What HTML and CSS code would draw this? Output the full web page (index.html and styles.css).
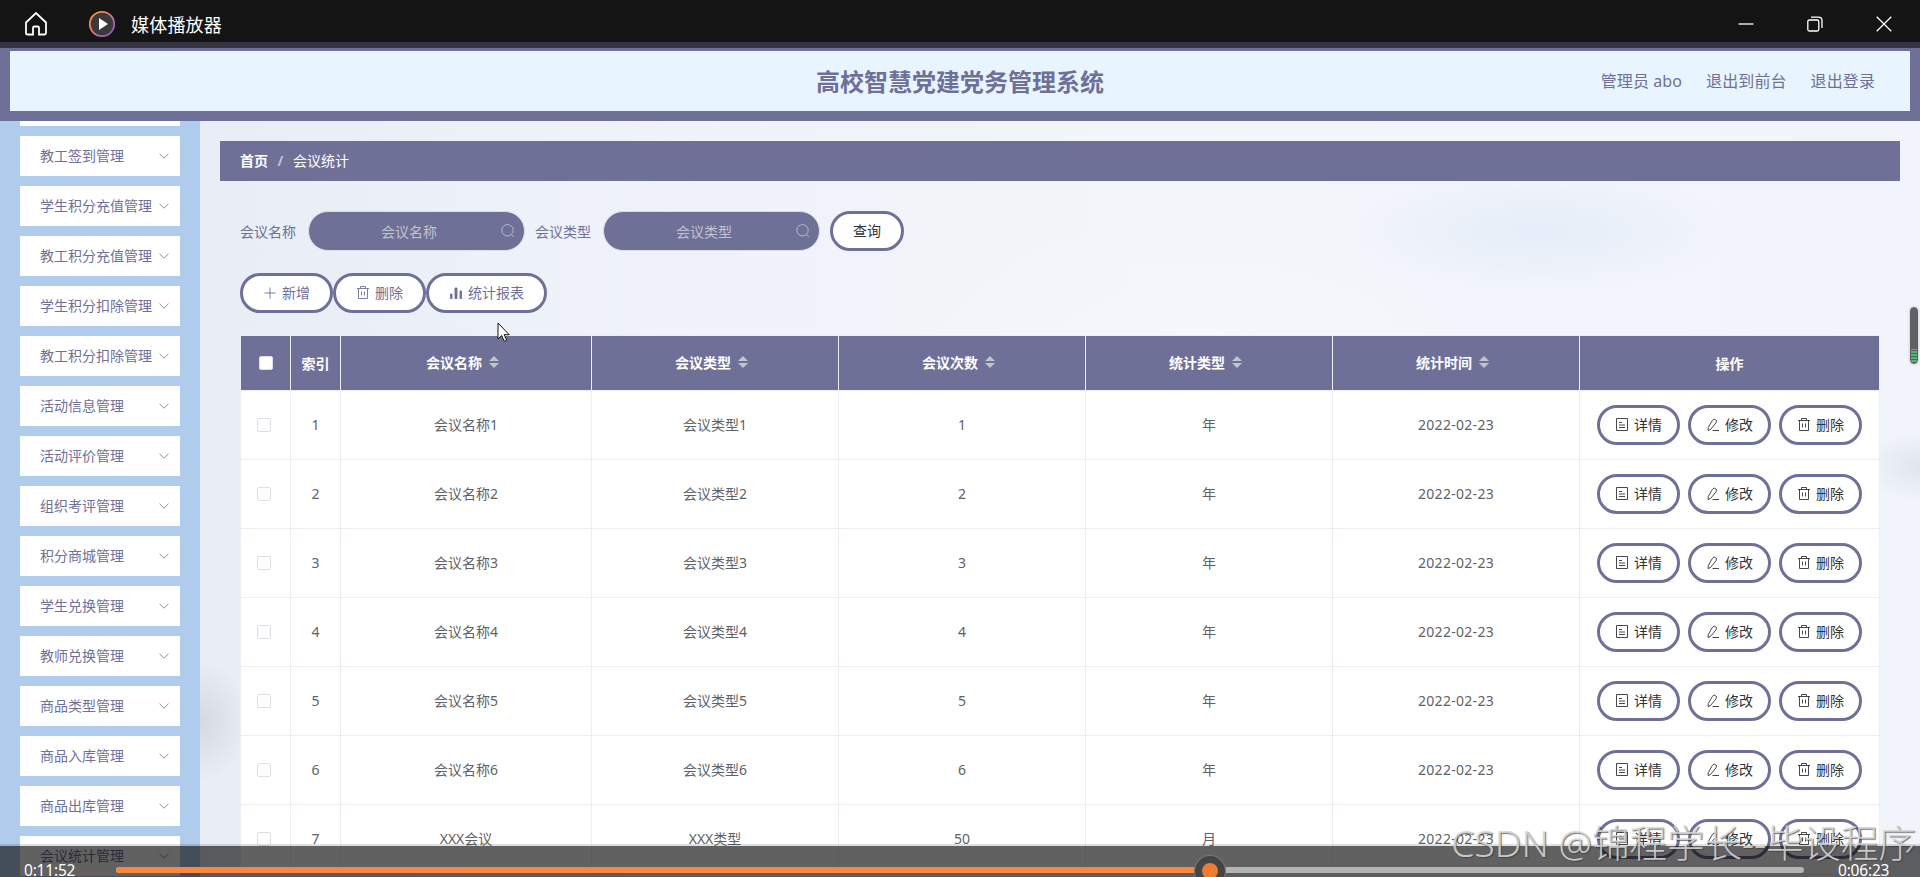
FILE: index.html
```
<!DOCTYPE html>
<html lang="zh-CN">
<head>
    <meta charset="UTF-8">
    <meta name="viewport" content="width=device-width, initial-scale=1.0">
    <title>高校智慧党建党务管理系统</title>
    <link rel="stylesheet" href="styles.css">
</head>
<body>
    <!-- 图标 -->
    <svg width="0" height="0" class="sprite">
        <symbol id="i-down" viewBox="0 0 12 12"><path d="M1.500 3.800 6 8.200l4.500-4.400"/></symbol>
        <symbol id="i-search" viewBox="0 0 14 14"><circle cx="6.500" cy="6.300" r="5.700"/><path d="M10.500 10.500 12.800 12.800"/></symbol>
        <symbol id="i-plus" viewBox="0 0 14 14"><path d="M7 1.500v11M1.500 7h11"/></symbol>
        <symbol id="i-del" viewBox="0 0 14 14"><path d="M1 2.500h12M4.500 2.500V.5h5v2M2.500 2.500v10h9v-10M5.500 5.500v4M8.500 5.500v4"/></symbol>
        <symbol id="i-doc" viewBox="0 0 14 14"><path d="M1.500.5h11v12h-11zM4 4.500h3M4 7h6M4 9.500h6"/></symbol>
        <symbol id="i-edit" viewBox="0 0 14 14"><path d="M6.300 2.500 8.200 1l2.300 1.500-.5 2.300-5.500 6.700L2 12.500l.3-3zM6.500 12.500h6.500"/></symbol>
        <symbol id="i-data" viewBox="0 0 14 14"><path d="M1.500 8h1.500v4.500h-1.500zM6 2h2v10.500H6zM11 5h1.500v7.500H11z" fill="currentColor"/></symbol>
    </svg>

    <div class="titlebar">
        <svg class="home" width="24" height="26" viewBox="0 0 24 26"><path d="M2 11.500 12 2l10 9.500V22q0 1.500-1.500 1.500H15V17q0-1.500-1.500-1.500h-3Q9 15.500 9 17v6.500H3.500Q2 23.500 2 22z"/></svg>
        <svg class="logo" width="28" height="28" viewBox="0 0 28 28">
            <defs><linearGradient id="ring" x1="0" y1="0" x2="1" y2="1"><stop offset=".15" stop-color="#ff8f3c"/><stop offset=".5" stop-color="#d9788c"/><stop offset=".9" stop-color="#8a55c8"/></linearGradient></defs>
            <circle cx="14" cy="14" r="12.200" fill="#3a3a3a" stroke="url(#ring)" stroke-width="1.800"/>
            <path d="M11 8l9 6-9 6z" fill="#fff"/>
        </svg>
        <span class="app-name">媒体播放器</span>
        <div class="win-btns">
            <svg width="16" height="16" viewBox="0 0 16 16"><path d="M.5 8h15"/></svg>
            <svg width="16" height="16" viewBox="0 0 16 16"><rect x=".8" y="4" width="11" height="11" rx="1.500"/><path d="M4 1.200h7.500Q15 1.200 15 4.500V12"/></svg>
            <svg width="16" height="16" viewBox="0 0 16 16"><path d="M.7.700l14.600 14.600M15.300.700.7 15.300"/></svg>
        </div>
    </div>

    <div class="header">
        <h1>高校智慧党建党务管理系统</h1>
        <div class="user">
            <span>管理员 abo</span>
            <span>退出到前台</span>
            <span>退出登录</span>
        </div>
    </div>

    <div class="page">
        <div class="sidebar" id="sidebar">
            <div class="menu-item first"></div>
        </div>
        <div class="main">
            <div class="breadcrumb"><b>首页</b><i>/</i><span>会议统计</span></div>
            <div class="search">
                <label>会议名称</label>
                <div class="input"><span>会议名称</span><svg class="icon"><use href="#i-search"/></svg></div>
                <label>会议类型</label>
                <div class="input"><span>会议类型</span><svg class="icon"><use href="#i-search"/></svg></div>
                <button class="btn query">查询</button>
            </div>
            <div class="actions">
                <button class="btn"><svg class="icon"><use href="#i-plus"/></svg>新增</button>
                <button class="btn"><svg class="icon"><use href="#i-del"/></svg>删除</button>
                <button class="btn"><svg class="icon"><use href="#i-data"/></svg>统计报表</button>
            </div>
            <table class="table">
                <colgroup>
                    <col class="c-sm"><col class="c-sm"><col class="c-name"><col class="c-md"><col class="c-md"><col class="c-md"><col class="c-md"><col class="c-op">
                </colgroup>
                <thead>
                    <tr>
                        <th><div class="check"></div></th>
                        <th>索引</th>
                        <th><div class="sortable">会议名称<span class="sort"></span></div></th>
                        <th><div class="sortable">会议类型<span class="sort"></span></div></th>
                        <th><div class="sortable">会议次数<span class="sort"></span></div></th>
                        <th><div class="sortable">统计类型<span class="sort"></span></div></th>
                        <th><div class="sortable">统计时间<span class="sort"></span></div></th>
                        <th>操作</th>
                    </tr>
                </thead>
                <tbody id="rows"></tbody>
            </table>
        </div>
    </div>

    <div class="volume"></div>
    <svg class="cursor" width="14" height="21" viewBox="0 0 14 21"><path d="M1 1v16l3.700-3.500 2.500 5.800 2.500-1.100-2.500-5.500h5z"/></svg>

    <div class="player">
        <span class="time">0:11:52</span>
        <div class="track"><div class="played"></div><div class="thumb"></div></div>
        <span class="time">0:06:23</span>
    </div>
    <div class="watermark">CSDN @锦程学长--毕设程序</div>

    <script>
        const menus = ['教工签到管理', '学生积分充值管理', '教工积分充值管理', '学生积分扣除管理', '教工积分扣除管理',
            '活动信息管理', '活动评价管理', '组织考评管理', '积分商城管理', '学生兑换管理', '教师兑换管理',
            '商品类型管理', '商品入库管理', '商品出库管理', '会议统计管理'];
        document.getElementById('sidebar').innerHTML += menus.map(m =>
            `<div class="menu-item"><span>${m}</span><svg class="arrow"><use href="#i-down"/></svg></div>`).join('');

        const list = [];
        for (let i = 1; i <= 6; i++) {
            list.push(['会议名称' + i, '会议类型' + i, i, '年']);
        }
        list.push(['XXX会议', 'XXX类型', 50, '月']);

        const op = (icon, text) => `<button class="btn"><svg class="icon"><use href="#${icon}"/></svg>${text}</button>`;
        document.getElementById('rows').innerHTML = list.map((r, i) => `
            <tr>
                <td><div class="check"></div></td>
                <td class="text">${i + 1}</td>
                ${r.map(v => `<td class="text">${v}</td>`).join('')}
                <td class="text date">2022-02-23</td>
                <td><div class="ops">${op('i-doc', '详情')}${op('i-edit', '修改')}${op('i-del', '删除')}</div></td>
            </tr>`).join('');
    </script>
</body>
</html>
```
FILE: styles.css
```
* {
    box-sizing: border-box;
}

body {
    margin: 0;
    height: 877px;
    overflow: hidden;
    display: flex;
    flex-direction: column;
    font-family: "Noto Sans", "Noto Sans CJK SC", sans-serif;
    font-size: 14px;
    color: #606266;
}

.sprite {
    position: absolute;
}

svg {
    fill: none;
    stroke: currentColor;
    flex-shrink: 0;
}

.icon {
    width: 14px;
    height: 14px;
    stroke-width: .9;
}

/* 播放器标题栏 */
.titlebar {
    height: 48px;
    flex-shrink: 0;
    background: #141414;
    border-bottom: 6px solid #363440;
    color: #fff;
    display: flex;
    align-items: center;
    padding: 5px 28px 0 24px;
}

.home {
    stroke-width: 1.8;
}

.logo {
    margin-left: 40px;
    stroke: none;
}

.app-name {
    font-size: 18px;
    margin-left: 15px;
    letter-spacing: .2px;
}

.win-btns {
    margin-left: auto;
    display: flex;
    gap: 53px;
}

.win-btns svg {
    stroke-width: 1.3;
}

/* 顶部 */
.header {
    height: 73px;
    flex-shrink: 0;
    background: #e8f5ff;
    border: solid #6f7098;
    border-width: 3px 10px 10px;
    display: grid;
    grid-template-columns: 1fr auto 1fr;
    align-items: center;
    color: #6f7098;
}

.header h1 {
    grid-column: 2;
    margin: 0;
    padding-top: 1px;
    font-size: 24px;
    line-height: 59px;
}

.user {
    display: flex;
    justify-content: flex-end;
    gap: 24px;
    padding: 0 35px 2px 0;
    font-size: 16px;
}

.user span {
    letter-spacing: .1px;
}

.page {
    flex: 1;
    min-height: 0;
    display: flex;
}

/* 左侧菜单 */
.sidebar {
    width: 200px;
    flex-shrink: 0;
    background: #b0ccec;
    padding: 0 20px;
    overflow: hidden;
}

.menu-item {
    height: 40px;
    margin-bottom: 10px;
    padding: 0 10px 0 20px;
    background: #fff;
    color: #6f7098;
    display: flex;
    align-items: center;
    justify-content: space-between;
    white-space: nowrap;
}

.menu-item span {
    padding-bottom: 2px;
}

.menu-item.first {
    height: 5px;
}

.arrow {
    width: 12px;
    height: 12px;
    color: #8d8eac;
}

.main {
    flex: 1;
    min-width: 0;
    padding: 20px 20px 0;
    overflow: hidden;
    background:
        radial-gradient(ellipse 70px 36px at 1730px 345px, rgba(210, 216, 223, .6), transparent),
        radial-gradient(ellipse 50px 60px at 0 600px, rgba(205, 208, 216, .7), transparent),
        radial-gradient(ellipse 190px 60px at 1340px 110px, rgba(224, 234, 247, .7), transparent),
        radial-gradient(ellipse 300px 120px at 1000px 220px, #f6f7fc, transparent),
        linear-gradient(90deg, #e8edf6, #eff3f9 25%, #f2f5fa 60%, #f1f4fb);
}

.breadcrumb {
    height: 40px;
    background: #6f7098;
    color: #fff;
    display: flex;
    align-items: center;
    padding: 0 0 2px 20px;
}

.breadcrumb i {
    margin: 0 9px;
    color: #c0c4cc;
    font-style: normal;
    font-weight: 700;
    width: 7px;
    text-align: center;
}

.search {
    display: flex;
    align-items: center;
    padding: 30px 20px 0;
    color: #6f7098;
}

.search label,
.input span {
    padding-bottom: 1px;
}

.input {
    width: 217px;
    height: 40px;
    margin: 0 10px 0 12px;
    border: 1px solid #dcdfe6;
    border-radius: 20px;
    background: #6f7098;
    color: #c0c4cc;
    display: flex;
    align-items: center;
    padding: 0 9px 0 8px;
}

.input span {
    flex: 1;
    text-align: center;
}

.btn {
    height: 40px;
    padding: 0 20px;
    border: 3px solid #6f7098;
    border-radius: 20px;
    background: #fff;
    color: #6f7098;
    font: inherit;
    line-height: 34px;
    display: flex;
    align-items: center;
    gap: 5px;
    white-space: nowrap;
}

.btn.query {
    color: #333;
}

.actions {
    display: flex;
    padding: 22px 20px 0;
}

/* 表格 */
.table {
    width: 1640px;
    margin: 22px 0 0 20px;
    table-layout: fixed;
    border-collapse: separate;
    border-spacing: 0;
    border: solid #ebeef5;
    border-width: 1px 0 0 1px;
    background: #fff;
    text-align: center;
}

.c-sm { width: 50px; }
.c-name { width: 251px; }
.c-md { width: 247px; }
.c-op { width: 300px; }

.table th,
.table td {
    padding: 0;
    border: solid #ebeef5;
    border-width: 0 1px 1px 0;
}

.table th {
    height: 55px;
    padding-bottom: 1px;
    background: #6f7098;
    color: #fff;
}

.table td {
    height: 69px;
}

.table td.text {
    padding-bottom: 2px;
}

.date {
    letter-spacing: .3px;
}

.check {
    width: 14px;
    height: 14px;
    margin: 0 auto;
    background: #fff;
    border: 1px solid #dcdfe6;
    border-radius: 2px;
}

td .check {
    margin-left: 16px;
}

.sortable {
    display: flex;
    align-items: center;
    justify-content: center;
    padding: 0 7px 2px 0;
}

.sort {
    display: flex;
    flex-direction: column;
    gap: 2px;
    margin: 1px 0 0 7px;
}

.sort::before,
.sort::after {
    content: "";
    border: 5px solid transparent;
    border-top-width: 0;
    border-bottom-color: #c0c4cc;
}

.sort::after {
    border-width: 5px 5px 0;
    border-top-color: #c0c4cc;
}

.ops {
    display: flex;
    justify-content: center;
    gap: 8px;
}

.ops .btn {
    padding: 0 15px;
    color: #333;
}

/* 浮层 */
.volume {
    position: absolute;
    left: 1910px;
    top: 307px;
    width: 8px;
    height: 57px;
    border-radius: 4px;
    border: 1px solid #606062;
    background: linear-gradient(#606062 41px, transparent 41px), repeating-linear-gradient(#50665a 0 1px, #4fb873 1px 3px);
    box-shadow: 0 0 3px rgba(0, 0, 0, .25);
}

.cursor {
    position: absolute;
    left: 497px;
    top: 322px;
    fill: #fff;
    stroke: #111;
}

.player {
    position: absolute;
    left: 0;
    top: 844px;
    width: 1920px;
    height: 33px;
    border-top: 2px solid rgba(0, 0, 0, .12);
    background: rgba(0, 0, 0, .62);
    background-clip: padding-box;
    display: flex;
    justify-content: space-between;
    padding: 0 30px 0 24px;
    color: #fff;
    overflow: hidden;
}

.time {
    width: 52px;
    font-size: 15.500px;
    line-height: 18px;
    padding-top: 15px;
    letter-spacing: -.2px;
}

.track {
    position: relative;
    width: 1688px;
    height: 6px;
    margin: 21px 0 0 5px;
    border-radius: 3px;
    background: #b4b4b4;
}

.played {
    width: 1094px;
    height: 6px;
    border-radius: 3px;
    background: #fb873f;
}

.thumb {
    position: absolute;
    left: 1079px;
    top: -11px;
    width: 30px;
    height: 30px;
    border: 7px solid #454545;
    border-radius: 50%;
    background: #ee7b31;
    box-shadow: 0 0 0 1px #777;
}

.watermark {
    position: absolute;
    left: 1451px;
    top: 816px;
    font-size: 37.500px;
    font-weight: 300;
    line-height: 54px;
    white-space: nowrap;
    color: rgba(215, 215, 215, .9);
    text-shadow: 1px 1px 1px rgba(60, 60, 60, .7);
}
```
